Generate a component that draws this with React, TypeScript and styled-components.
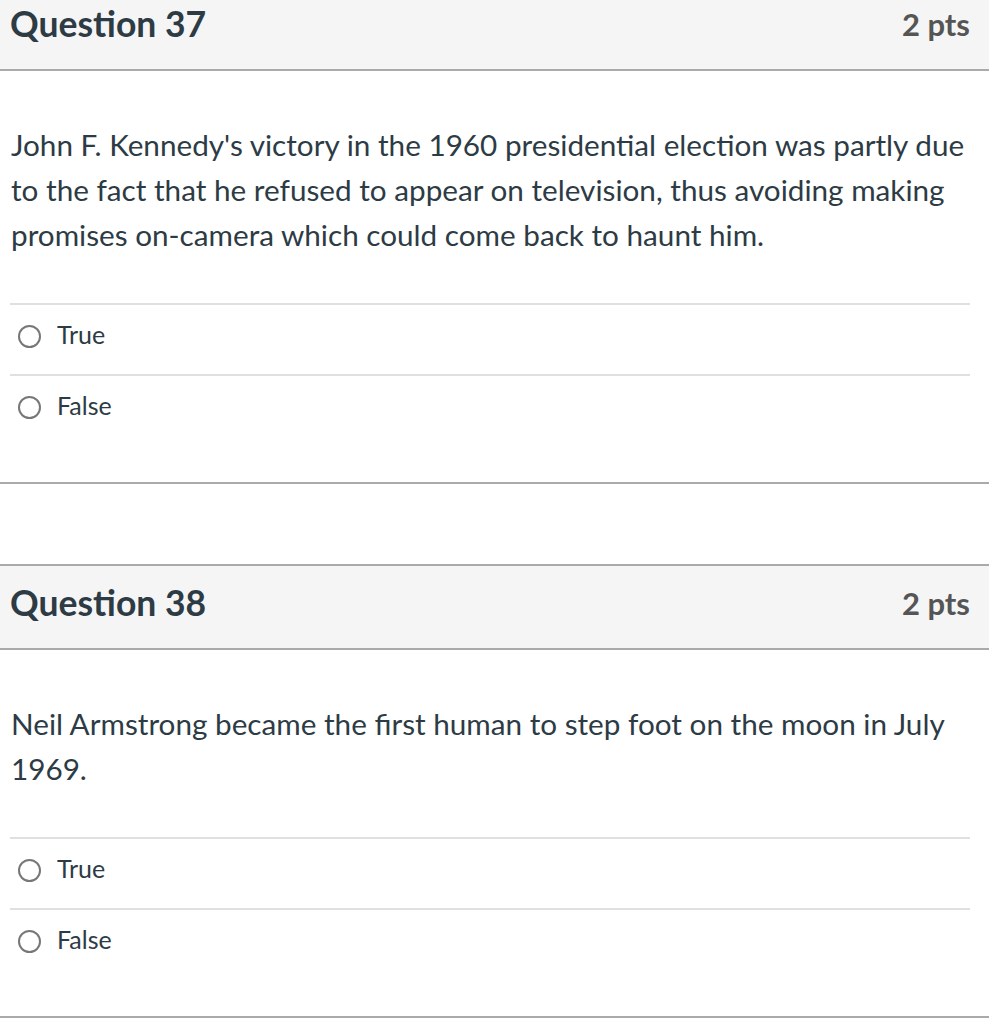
import { createGlobalStyle } from 'styled-components';
import styled from 'styled-components';

const GlobalStyle = createGlobalStyle`
  html, body {
    margin: 0;
    padding: 0;
    background: #fff;
  }
  body {
    font-family: Lato, 'Liberation Sans', sans-serif;
    color: #2d3b45;
  }
`;

const QuizStyles = styled.div`
  margin-top: -15px;
  display: flex;
  flex-direction: column;
  gap: 80px;
`;

const QuestionStyles = styled.div`
  border-top: 2px solid #aaa;
  border-bottom: 2px solid #aaa;
  .question {
    &-header {
      display: flex;
      justify-content: space-between;
      align-items: center;
      height: 84px;
      padding: 0 19px 9px 10px;
      box-sizing: border-box;
      background: #f5f5f5;
      border-bottom: 2px solid #aaa;
    }
    &-name {
      font-size: 35.5px;
      font-weight: 700;
      color: #2d3b45;
    }
    &-points {
      font-size: 31px;
      font-weight: 700;
      color: #555;
    }
    &-text {
      padding: 51px 10px 0 11px;
      font-size: 29.7px;
      line-height: 45px;
      margin: 0;
    }
    &-answers {
      margin: 46px 19px 0 10px;
      padding-bottom: 37px;
    }
  }
`;

const AnswerRow = styled.label`
  display: flex;
  align-items: center;
  gap: 16px;
  height: 71px;
  padding: 0 0 11px 8px;
  border-top: 2px solid #e0e0e0;
  box-sizing: border-box;
  font-size: 25px;
  color: #2d3b45;
`;

const Radio = styled.span`
  width: 23px;
  height: 23px;
  margin-top: 4px;
  box-sizing: border-box;
  border-radius: 50%;
  border: 2px solid #777;
  background: #fff;
  flex-shrink: 0;
`;

type Question = {
  name: string;
  points: string;
  text: string;
  answers: string[];
};

const questions: Question[] = [
  {
    name: 'Question 37',
    points: '2 pts',
    text: "John F. Kennedy's victory in the 1960 presidential election was partly due to the fact that he refused to appear on television, thus avoiding making promises on-camera which could come back to haunt him.",
    answers: ['True', 'False'],
  },
  {
    name: 'Question 38',
    points: '2 pts',
    text: 'Neil Armstrong became the first human to step foot on the moon in July 1969.',
    answers: ['True', 'False'],
  },
];

const QuestionItem = ({ q }: { q: Question }) => {
  return (
    <QuestionStyles>
      <div className="question-header">
        <span className="question-name">{q.name}</span>
        <span className="question-points">{q.points}</span>
      </div>
      <p className="question-text">{q.text}</p>
      <div className="question-answers">
        {q.answers.map((a) => (
          <AnswerRow key={a}>
            <Radio />
            {a}
          </AnswerRow>
        ))}
      </div>
    </QuestionStyles>
  );
};

const App = () => {
  return (
    <>
      <GlobalStyle />
      <QuizStyles>
        {questions.map((q) => (
          <QuestionItem key={q.name} q={q} />
        ))}
      </QuizStyles>
    </>
  );
};

export default App;
